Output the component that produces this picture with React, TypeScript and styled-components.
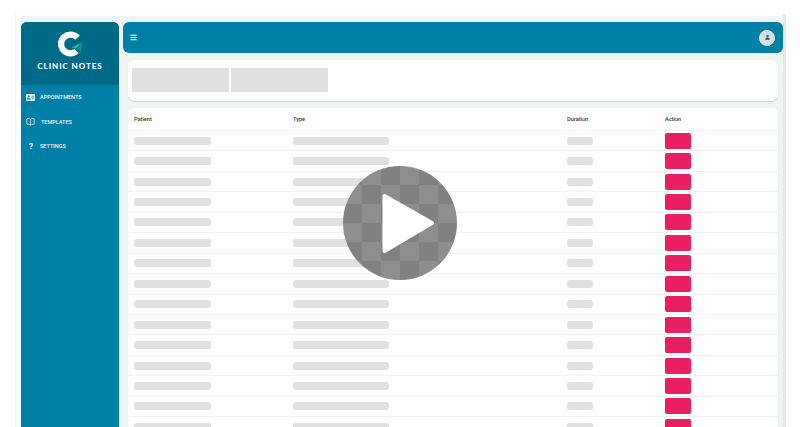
import styled, { createGlobalStyle } from "styled-components";
import { FaAddressCard, FaBars, FaQuestion, FaUser } from "react-icons/fa";
import { LuBookOpen } from "react-icons/lu";

const GlobalStyle = createGlobalStyle`
  html, body {
    margin: 0;
    height: 100%;
    overflow: hidden;
    background: #fff;
    font-family: Roboto, "Liberation Sans", sans-serif;
  }
`;

const Page = styled.div`
  position: relative;
  box-sizing: border-box;
  height: 427px;
  padding: 14px 14px 0 15px;
  display: flex;
  overflow: hidden;
`;

const Screen = styled.div`
  flex: 1;
  display: flex;
  padding: 2px 0 0 5px;
  border-left: 1px solid #f3f3f3;
  border-right: 3px solid #e3e6e9;
`;

const Frame = styled.div`
  flex: 1;
  display: flex;
  gap: 4px;
  padding-top: 6px;
  background: #f1f4f5;
`;

const Sidebar = styled.aside`
  width: 98px;
  flex-shrink: 0;
  background: #007fa7;
  border-radius: 6px 6px 0 0;
  overflow: hidden;
`;

const Brand = styled.div`
  height: 63px;
  background: #006a87;
  display: flex;
  flex-direction: column;
  align-items: center;
  padding-top: 9px;
  box-sizing: border-box;
`;

const BrandName = styled.div`
  margin-top: 5px;
  color: #fff;
  font-family: Lato, sans-serif;
  font-weight: 900;
  font-size: 8px;
  letter-spacing: 0.95px;
  line-height: 9px;
  white-space: nowrap;
`;

const NavList = styled.nav`
  display: flex;
  flex-direction: column;
`;

const NavItem = styled.div`
  height: 24.4px;
  display: flex;
  align-items: center;
  color: #eef6f9;
  font-size: 5.5px;
  font-weight: 500;
  padding-left: 5px;
`;

const NavIcon = styled.span<{ $size?: number }>`
  width: 9px;
  display: flex;
  justify-content: center;
  font-size: ${({ $size }) => $size ?? 9}px;
`;

const NavLabel = styled.span<{ $shift?: number }>`
  margin-left: ${({ $shift }) => $shift ?? 5}px;
`;

const Main = styled.main`
  flex: 1;
  min-width: 0;
  display: flex;
  flex-direction: column;
`;

const TopBar = styled.header`
  height: 31px;
  flex-shrink: 0;
  background: #007fa7;
  border-radius: 6px;
  display: flex;
  align-items: center;
  justify-content: space-between;
  padding: 0 8px 0 7px;
  color: #fff;
  font-size: 7px;
`;

const Avatar = styled.div`
  width: 16px;
  height: 16px;
  box-sizing: border-box;
  border-radius: 50%;
  background: #dcdcdc;
  border: 1px solid #f4f4f4;
  display: flex;
  align-items: center;
  justify-content: center;
  color: #00789d;
  font-size: 5px;
`;

const Content = styled.div`
  flex: 1;
  min-height: 0;
  display: flex;
  flex-direction: column;
  gap: 7px;
  padding: 7px 5px 0;
`;

const FilterCard = styled.section`
  height: 41px;
  flex-shrink: 0;
  box-sizing: border-box;
  background: #fff;
  border-radius: 7px;
  box-shadow: 0 1px 1px #cfd2d2;
  display: flex;
  gap: 2px;
  padding: 8px 4px;
`;

const FilterBlock = styled.div`
  width: 97px;
  height: 24px;
  background: #e0e0e0;
`;

const TableCard = styled.section`
  flex: 1;
  min-height: 0;
  background: #fff;
  border-radius: 6px 6px 0 0;
  overflow: hidden;
`;

const Row = styled.div<{ $head?: boolean }>`
  display: grid;
  grid-template-columns: 159px 274px 98px 1fr;
  align-items: center;
  box-sizing: border-box;
  height: ${({ $head }) => ($head ? "23px" : "20.45px")};
  padding-left: 6px;
  border-bottom: 1px solid #f2f2f2;
  font-size: 5.6px;
  font-weight: 500;
  color: #333;
`;

const Skeleton = styled.div<{ $w: number }>`
  width: ${({ $w }) => $w}px;
  height: 8px;
  border-radius: 3px;
  background: #e0e0e0;
`;

const ActionButton = styled.div`
  width: 26px;
  height: 16px;
  border-radius: 2px;
  background: #e91e63;
`;

const PlayOverlay = styled.svg`
  position: absolute;
  left: 343px;
  top: 166px;
  width: 114px;
  height: 114px;
`;

const rows = Array.from({ length: 15 }, (_, i) => i);
const cells = Array.from({ length: 36 }, (_, i) => i);

function Logo() {
  return (
    <svg width="27" height="26" viewBox="0 0 27 26">
      <path
        d="M20.5 6.7 A9.4 9.4 0 1 0 19.5 20.2"
        fill="none"
        stroke="#fff"
        strokeWidth="6.2"
      />
      <g stroke="#006a87" strokeWidth="0.6" strokeLinejoin="round">
        <path d="M26 10.5 L13.5 17 L20 17.2 Z" fill="#2ec4a8" />
        <path d="M26 10.5 L20 17.2 L24 23.5 Z" fill="#0a8f8c" />
      </g>
    </svg>
  );
}

export default function App() {
  return (
    <>
      <GlobalStyle />
      <Page>
        <Screen>
          <Frame>
            <Sidebar>
              <Brand>
                <Logo />
                <BrandName>CLINIC NOTES</BrandName>
              </Brand>
              <NavList>
                <NavItem>
                  <NavIcon>
                    <FaAddressCard />
                  </NavIcon>
                  <NavLabel>APPOINTMENTS</NavLabel>
                </NavItem>
                <NavItem>
                  <NavIcon $size={10}>
                    <LuBookOpen />
                  </NavIcon>
                  <NavLabel $shift={6}>TEMPLATES</NavLabel>
                </NavItem>
                <NavItem>
                  <NavIcon $size={6}>
                    <FaQuestion />
                  </NavIcon>
                  <NavLabel>SETTINGS</NavLabel>
                </NavItem>
              </NavList>
            </Sidebar>
            <Main>
              <TopBar>
                <FaBars />
                <Avatar>
                  <FaUser />
                </Avatar>
              </TopBar>
              <Content>
                <FilterCard>
                  <FilterBlock />
                  <FilterBlock />
                </FilterCard>
                <TableCard>
                  <Row $head>
                    <span>Patient</span>
                    <span>Type</span>
                    <span>Duration</span>
                    <span>Action</span>
                  </Row>
                  {rows.map((r) => (
                    <Row key={r}>
                      <Skeleton $w={77} />
                      <Skeleton $w={96} />
                      <Skeleton $w={26} />
                      <ActionButton />
                    </Row>
                  ))}
                </TableCard>
              </Content>
            </Main>
          </Frame>
        </Screen>
        <PlayOverlay viewBox="0 0 114 114">
          <defs>
            <clipPath id="disc">
              <circle cx="57" cy="57" r="57" />
            </clipPath>
          </defs>
          <g clipPath="url(#disc)">
            {cells.map((c) => {
              const col = c % 6;
              const row = Math.floor(c / 6);
              return (
                <rect
                  key={c}
                  x={col * 19}
                  y={row * 19}
                  width="19.2"
                  height="19.2"
                  fill={(col + row) % 2 === 0 ? "#818181" : "#8e8e8e"}
                />
              );
            })}
          </g>
          <path
            d="M41.5 30 L89 57 L41.5 85 Z"
            fill="#fff"
            stroke="#fff"
            strokeWidth="4"
            strokeLinejoin="round"
          />
        </PlayOverlay>
      </Page>
    </>
  );
}
